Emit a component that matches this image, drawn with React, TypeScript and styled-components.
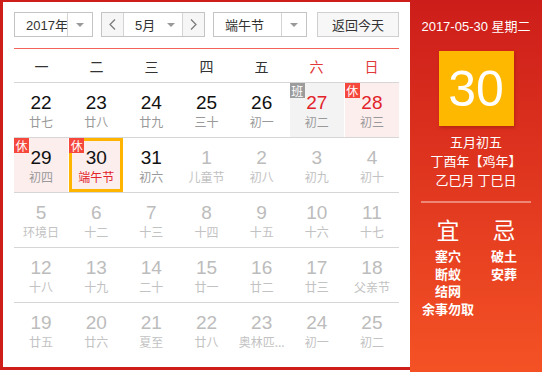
import React from 'react';
import styled, { createGlobalStyle } from 'styled-components';

type Mark = 'rest' | 'work';

interface IDay {
  day: number;
  lunar: string;
  other?: boolean;
  weekend?: boolean;
  mark?: Mark;
  festival?: boolean;
  selected?: boolean;
}

const weekdays = ['一', '二', '三', '四', '五', '六', '日'];

const days: IDay[] = [
  { day: 22, lunar: '廿七' },
  { day: 23, lunar: '廿八' },
  { day: 24, lunar: '廿九' },
  { day: 25, lunar: '三十' },
  { day: 26, lunar: '初一' },
  { day: 27, lunar: '初二', weekend: true, mark: 'work' },
  { day: 28, lunar: '初三', weekend: true, mark: 'rest' },
  { day: 29, lunar: '初四', mark: 'rest' },
  { day: 30, lunar: '端午节', mark: 'rest', festival: true, selected: true },
  { day: 31, lunar: '初六' },
  { day: 1, lunar: '儿童节', other: true },
  { day: 2, lunar: '初八', other: true },
  { day: 3, lunar: '初九', other: true },
  { day: 4, lunar: '初十', other: true },
  { day: 5, lunar: '环境日', other: true },
  { day: 6, lunar: '十二', other: true },
  { day: 7, lunar: '十三', other: true },
  { day: 8, lunar: '十四', other: true },
  { day: 9, lunar: '十五', other: true },
  { day: 10, lunar: '十六', other: true },
  { day: 11, lunar: '十七', other: true },
  { day: 12, lunar: '十八', other: true },
  { day: 13, lunar: '十九', other: true },
  { day: 14, lunar: '二十', other: true },
  { day: 15, lunar: '廿一', other: true },
  { day: 16, lunar: '廿二', other: true },
  { day: 17, lunar: '廿三', other: true },
  { day: 18, lunar: '父亲节', other: true },
  { day: 19, lunar: '廿五', other: true },
  { day: 20, lunar: '廿六', other: true },
  { day: 21, lunar: '夏至', other: true },
  { day: 22, lunar: '廿八', other: true },
  { day: 23, lunar: '奥林匹...', other: true },
  { day: 24, lunar: '初一', other: true },
  { day: 25, lunar: '初二', other: true },
];

const weeks: IDay[][] = [];
for (let i = 0; i < days.length; i += 7) weeks.push(days.slice(i, i + 7));

const good = ['塞穴', '断蚁', '结网', '余事勿取'];
const bad = ['破土', '安葬'];

const GlobalStyle = createGlobalStyle`
  body {
    margin: 0;
    background: #fff;
    font-family: "Liberation Sans", "Noto Sans CJK SC", sans-serif;
  }
`;

const Wrapper = styled.div`
  display: flex;
  width: 542px;
  height: 372px;
`;

const Main = styled.div`
  box-sizing: border-box;
  width: 410px;
  height: 370px;
  border: 3px solid #cd1e19;
  border-top-width: 2px;
  border-right: none;
  padding: 10px 11px 0 11px;
`;

const Toolbar = styled.div`
  display: flex;
  height: 25px;
  font-size: 13px;
  color: #333;
`;

const SelectBox = styled.div<{ $w: number; $ml?: number }>`
  box-sizing: border-box;
  display: flex;
  width: ${(p) => p.$w}px;
  margin-left: ${(p) => p.$ml ?? 0}px;
  height: 25px;
  border: 1px solid #c4c4c4;
  background: #fff;
`;

const SelectLabel = styled.div<{ $pr?: number; $cjk?: boolean }>`
  flex: 1;
  min-width: 0;
  display: flex;
  align-items: center;
  justify-content: space-between;
  white-space: nowrap;
  padding: 0 ${(p) => p.$pr ?? 0}px 0 11px;
  ${(p) => (p.$cjk ? 'font-family: "Noto Sans CJK SC", sans-serif;' : '')}
`;

const ArrowCell = styled.div`
  width: 24px;
  display: flex;
  align-items: center;
  justify-content: center;
  border-left: 1px solid #d4d4d4;
`;

const Caret = styled.span`
  width: 0;
  height: 0;
  border-left: 4px solid transparent;
  border-right: 4px solid transparent;
  border-top: 4px solid #999;
`;

const NavButton = styled.div<{ $side: 'left' | 'right' }>`
  width: 21px;
  display: flex;
  align-items: center;
  justify-content: center;
  background: #f6f6f6;
  ${(p) => (p.$side === 'left' ? 'border-right' : 'border-left')}: 1px solid #d4d4d4;
`;

const TodayButton = styled.div`
  box-sizing: border-box;
  width: 82px;
  height: 25px;
  margin-left: 10px;
  border: 1px solid #cfcfcf;
  background: #f7f7f7;
  display: flex;
  align-items: center;
  justify-content: center;
  font-family: "Noto Sans CJK SC", sans-serif;
`;

const Head = styled.div`
  display: grid;
  grid-template-columns: repeat(7, 1fr);
  margin-top: 11px;
  height: 33px;
  border-top: 1px solid #f26457;
  border-bottom: 1px solid #d6d6d6;
`;

const HeadCell = styled.div<{ $red?: boolean }>`
  display: flex;
  align-items: center;
  justify-content: center;
  font-family: "Noto Sans CJK SC", sans-serif;
  font-size: 14px;
  color: ${(p) => (p.$red ? '#e2383a' : '#333')};
`;

const Week = styled.div<{ $first?: boolean }>`
  display: grid;
  grid-template-columns: repeat(7, 1fr);
  column-gap: 1px;
  height: 54px;
  border-top: ${(p) => (p.$first ? 'none' : '1px solid #d6d6d6')};
`;

const Cell = styled.div<{ $mark?: Mark; $selected?: boolean }>`
  position: relative;
  box-sizing: border-box;
  min-width: 0;
  text-align: center;
  background: ${(p) => (p.$mark === 'rest' ? '#fdeeee' : p.$mark === 'work' ? '#f3f3f3' : 'transparent')};
  border: ${(p) => (p.$selected ? '3px solid #ffb500' : 'none')};
  padding-top: ${(p) => (p.$selected ? 6 : 9)}px;
`;

const Num = styled.div<{ $color: string }>`
  font-size: 19px;
  line-height: 22px;
  color: ${(p) => p.$color};
`;

const Lunar = styled.div<{ $color: string }>`
  font-family: "Noto Sans CJK SC", sans-serif;
  font-size: 12px;
  line-height: 16px;
  color: ${(p) => p.$color};
  white-space: nowrap;
`;

const Badge = styled.span<{ $mark: Mark; $selected?: boolean }>`
  position: absolute;
  left: ${(p) => (p.$selected ? -3 : 0)}px;
  top: ${(p) => (p.$selected ? -3 : 0)}px;
  width: 15px;
  height: 15px;
  line-height: 15px;
  font-family: "Noto Sans CJK SC", sans-serif;
  font-size: 12px;
  text-align: center;
  color: #fff;
  background: ${(p) => (p.$mark === 'rest' ? '#f5473b' : '#9c9c9c')};
`;

const Side = styled.div`
  width: 132px;
  height: 372px;
  background: linear-gradient(to bottom, #cd1d1a 0%, #f45225 100%);
  color: #fff;
  display: flex;
  flex-direction: column;
  align-items: center;
`;

const DateLine = styled.div`
  margin-top: 18px;
  font-size: 13px;
  line-height: 16px;
  white-space: nowrap;
`;

const BigDay = styled.div`
  margin-top: 16px;
  width: 75px;
  height: 75px;
  background: #ffb800;
  box-shadow: 1px 2px 3px rgba(120, 20, 0, 0.35);
  display: flex;
  align-items: center;
  justify-content: center;
  font-size: 50px;
  color: #fff;
`;

const LunarInfo = styled.div`
  margin-top: 6px;
  font-family: "Noto Sans CJK SC", sans-serif;
  font-size: 13px;
  line-height: 19px;
  text-align: center;
  white-space: nowrap;
`;

const Divider = styled.div`
  margin-top: 12px;
  width: 110px;
  height: 2px;
  background: rgba(255, 255, 255, 0.4);
`;

const Advice = styled.div`
  display: grid;
  grid-template-columns: 56px 56px;
  margin-top: 12px;
`;

const AdviceCol = styled.div`
  display: flex;
  flex-direction: column;
  align-items: center;
  font-family: "Noto Sans CJK SC", sans-serif;
`;

const AdviceTitle = styled.div`
  font-size: 23px;
  line-height: 28px;
  margin-bottom: 4px;
`;

const AdviceItem = styled.div`
  font-size: 13px;
  line-height: 17.7px;
  font-weight: bold;
  white-space: nowrap;
`;

const Chevron = ({ dir }: { dir: 'left' | 'right' }) => (
  <svg width="7" height="11" viewBox="0 0 7 11">
    <polyline
      points={dir === 'left' ? '6,0.5 1,5.5 6,10.5' : '1,0.5 6,5.5 1,10.5'}
      fill="none"
      stroke="#777"
      strokeWidth="1.2"
    />
  </svg>
);

const numColor = (d: IDay) => (d.other ? '#bcbcbc' : d.weekend ? '#e2232a' : '#111');
const lunarColor = (d: IDay) => (d.festival ? '#e2232a' : d.other ? '#c2c2c2' : '#999');

const App = () => (
  <>
    <GlobalStyle />
    <Wrapper>
      <Main>
        <Toolbar>
          <SelectBox $w={79}>
            <SelectLabel>2017年</SelectLabel>
            <ArrowCell>
              <Caret />
            </ArrowCell>
          </SelectBox>
          <SelectBox $w={104} $ml={8}>
            <NavButton $side="left">
              <Chevron dir="left" />
            </NavButton>
            <SelectLabel $pr={7}>
              5月
              <Caret />
            </SelectLabel>
            <NavButton $side="right">
              <Chevron dir="right" />
            </NavButton>
          </SelectBox>
          <SelectBox $w={94} $ml={8}>
            <SelectLabel $cjk>端午节</SelectLabel>
            <ArrowCell>
              <Caret />
            </ArrowCell>
          </SelectBox>
          <TodayButton>返回今天</TodayButton>
        </Toolbar>

        <Head>
          {weekdays.map((w, i) => (
            <HeadCell key={w} $red={i >= 5}>
              {w}
            </HeadCell>
          ))}
        </Head>

        {weeks.map((week, wi) => (
          <Week key={wi} $first={wi === 0}>
            {week.map((d) => (
              <Cell key={`${wi}-${d.day}`} $mark={d.mark} $selected={d.selected}>
                {d.mark && (
                  <Badge $mark={d.mark} $selected={d.selected}>
                    {d.mark === 'rest' ? '休' : '班'}
                  </Badge>
                )}
                <Num $color={numColor(d)}>{d.day}</Num>
                <Lunar $color={lunarColor(d)}>{d.lunar}</Lunar>
              </Cell>
            ))}
          </Week>
        ))}
      </Main>

      <Side>
        <DateLine>
          2017-05-30 <span style={{ fontFamily: '"Noto Sans CJK SC", sans-serif' }}>星期二</span>
        </DateLine>
        <BigDay>30</BigDay>
        <LunarInfo>
          五月初五
          <br />
          丁酉年【鸡年】
          <br />
          乙巳月 丁巳日
        </LunarInfo>
        <Divider />
        <Advice>
          <AdviceCol>
            <AdviceTitle>宜</AdviceTitle>
            {good.map((g) => (
              <AdviceItem key={g}>{g}</AdviceItem>
            ))}
          </AdviceCol>
          <AdviceCol>
            <AdviceTitle>忌</AdviceTitle>
            {bad.map((b) => (
              <AdviceItem key={b}>{b}</AdviceItem>
            ))}
          </AdviceCol>
        </Advice>
      </Side>
    </Wrapper>
  </>
);

export default App;
